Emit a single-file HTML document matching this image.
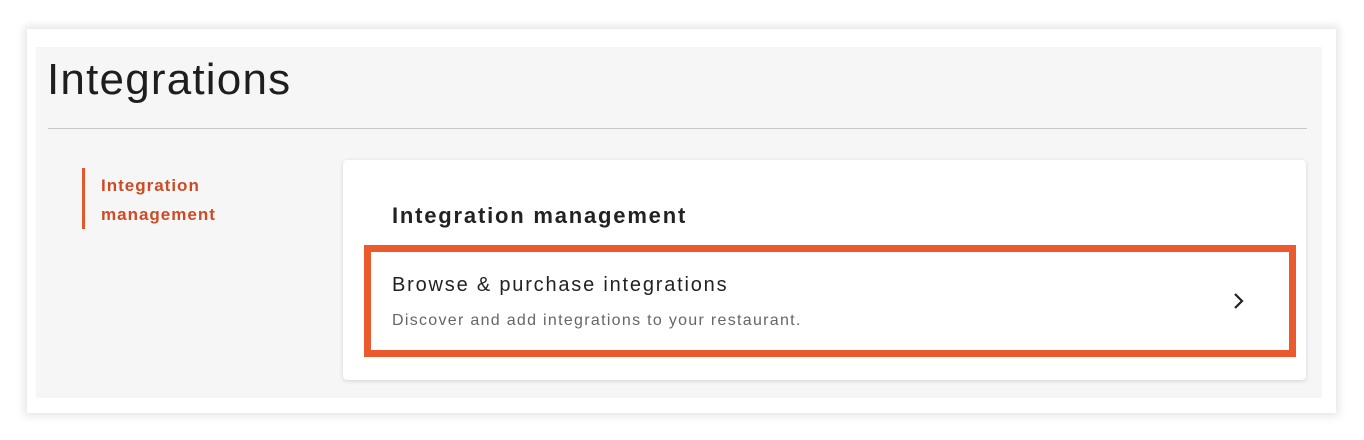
<!DOCTYPE html>
<html><head><style>
*{margin:0;padding:0;box-sizing:border-box}
body{width:1364px;height:440px;background:#fff;font-family:"Liberation Sans",sans-serif;position:relative;overflow:hidden}
.frame{position:absolute;left:27px;top:29px;width:1309px;height:384px;background:#fff;box-shadow:0 0 8px 3px rgba(0,0,0,.1)}
.gray{position:absolute;left:36px;top:47px;width:1286px;height:351px;background:#f6f6f6}
h1{position:absolute;left:47px;top:55px;font-size:44px;font-weight:normal;color:#1e1e1e;letter-spacing:1.2px}
.line{position:absolute;left:48px;top:128px;width:1259px;height:1px;background:#c8c8c8}
.bar{position:absolute;left:82px;top:168px;width:3px;height:61px;background:#e4572e}
.side{position:absolute;left:101px;top:171px;font-size:17px;font-weight:bold;color:#cf4a24;line-height:29px;letter-spacing:1px}
.card{position:absolute;left:343px;top:160px;width:963px;height:220px;background:#fff;border-radius:4px;box-shadow:0 1px 4px rgba(0,0,0,.15)}
.h2{position:absolute;left:392px;top:203px;font-size:22px;font-weight:bold;color:#222;letter-spacing:1.8px}
.box{position:absolute;left:364px;top:245px;width:932px;height:112px;border:7px solid #ea5a2c}
.t1{position:absolute;left:392px;top:274px;font-size:20px;color:#222;letter-spacing:1.8px}
.t2{position:absolute;left:392px;top:312px;font-size:16px;color:#666;letter-spacing:1.3px}
svg{position:absolute;left:1232px;top:292px}
</style></head><body>
<div class="frame"></div>
<div class="gray"></div>
<h1>Integrations</h1>
<div class="line"></div>
<div class="bar"></div>
<div class="side">Integration<br>management</div>
<div class="card"></div>
<div class="h2">Integration management</div>
<div class="box"></div>
<div class="t1">Browse &amp; purchase integrations</div>
<div class="t2">Discover and add integrations to your restaurant.</div>
<svg width="14" height="18" viewBox="0 0 14 18"><path d="M3 2 L10 9 L3 16" fill="none" stroke="#222" stroke-width="2.2"/></svg>
</body></html>
